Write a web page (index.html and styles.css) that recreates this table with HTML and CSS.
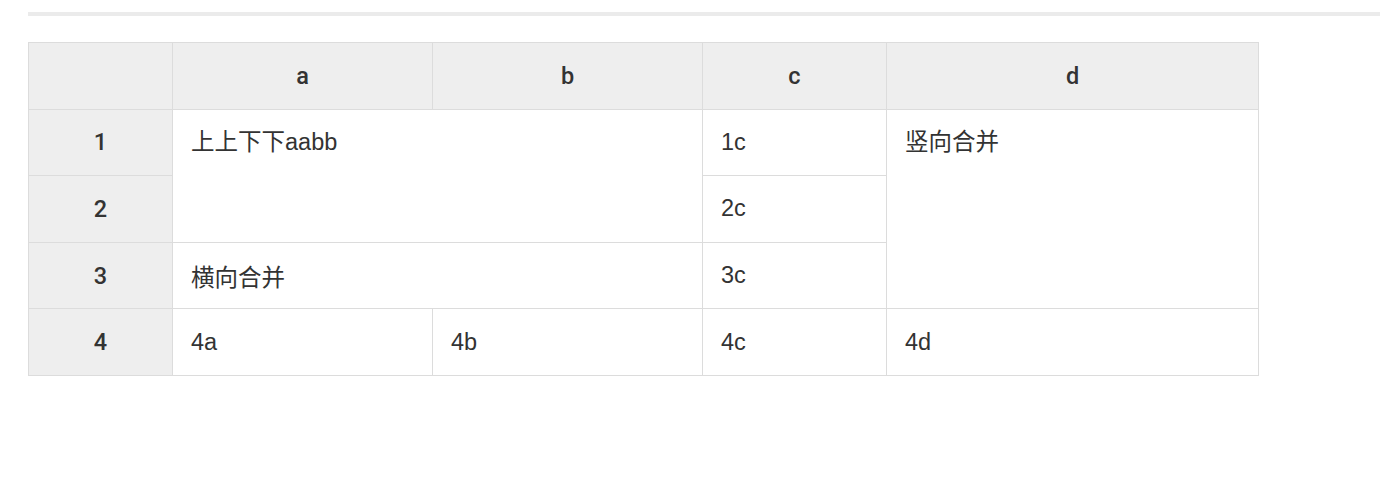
FILE: index.html
```html
<!DOCTYPE html>
<html>
<head>
    <title>Merged cells</title>
    <link rel="stylesheet" href="styles.css">
</head>
<body>
    <div class="rule"></div>

    <table class="sheet">
        <colgroup>
            <col class="col-idx">
            <col class="col-a">
            <col class="col-b">
            <col class="col-c">
            <col class="col-d">
        </colgroup>
        <thead>
            <tr>
                <th></th>
                <th>a</th>
                <th>b</th>
                <th>c</th>
                <th>d</th>
            </tr>
        </thead>
        <tbody>
            <tr>
                <th>1</th>
                <td colspan="2" rowspan="2">上上下下aabb</td>
                <td>1c</td>
                <td rowspan="3">竖向合并</td>
            </tr>
            <tr>
                <th>2</th>
                <td>2c</td>
            </tr>
            <tr>
                <th>3</th>
                <td colspan="2">横向合并</td>
                <td>3c</td>
            </tr>
            <tr>
                <th>4</th>
                <td>4a</td>
                <td>4b</td>
                <td>4c</td>
                <td>4d</td>
            </tr>
        </tbody>
    </table>
</body>
</html>
```

FILE: styles.css
```css
body {
    margin: 0;
    padding: 12px 0 0 28px;
    font-family: "Liberation Sans", "Noto Sans CJK SC", sans-serif;
    color: #333;
    background: #fff;
}
.rule {
    height: 4px;
    background: #ebebeb;
}
.sheet {
    margin-top: 26px;
    width: 1231px;
    border-collapse: collapse;
    table-layout: fixed;
    font-size: 23.5px;
}
.col-idx { width: 144px; }
.col-a { width: 260px; }
.col-b { width: 270px; }
.col-c { width: 184px; }
.col-d { width: 372px; }
.sheet tr {
    height: 66.6px;
}
.sheet th,
.sheet td {
    border: 1px solid #dcdcdc;
    padding: 0 0 0 18px;
    box-sizing: border-box;
    vertical-align: middle;
    text-align: left;
}
.sheet td[rowspan] {
    vertical-align: top;
    padding-top: 13px;
}
.sheet th {
    background: #eeeeee;
    font-family: Roboto, "Noto Sans CJK SC", sans-serif;
    font-weight: 500;
    text-align: center;
    padding: 0;
}
```
